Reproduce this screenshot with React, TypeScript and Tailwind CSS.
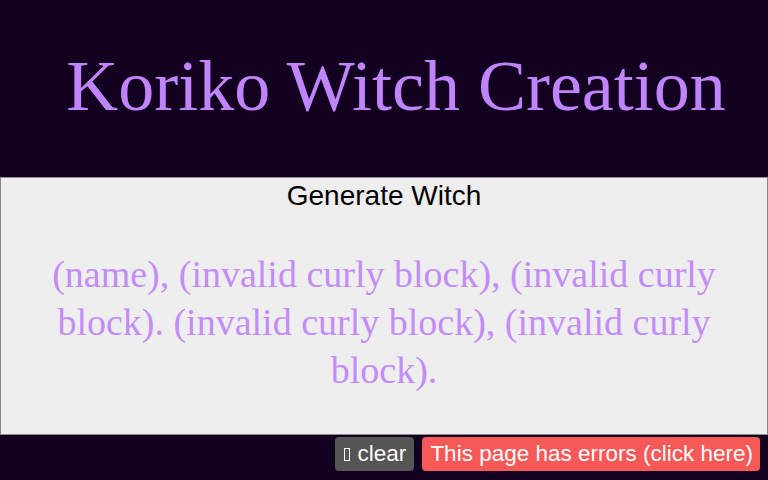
import { useState } from "react";

function App() {
  const [output] = useState(
    "(name), (invalid curly block), (invalid curly block). (invalid curly block), (invalid curly block)."
  );

  return (
    <div className="relative h-[480px] w-[768px] overflow-hidden bg-[#130020]" style={{ fontFamily: '"Liberation Serif", serif' }}>
      {/* header */}
      <h1 className="pt-[46px] pl-6 text-center text-[72px] leading-[80px] text-[#c084fc]">
        Koriko Witch Creation
      </h1>

      {/* generator box */}
      <div className="mt-[51px] h-[258px] border border-[#8a8a8a] bg-[#eeeeee]">
        <div className="pt-[1px] text-center text-[28px] leading-[34px] text-black" style={{ fontFamily: '"Liberation Sans", sans-serif' }}>
          Generate Witch
        </div>
        <p className="mt-[37px] px-12 text-center text-[38px] leading-[48px] text-[#c38cf7]">
          {output}
        </p>
      </div>

      {/* floating buttons */}
      <div className="absolute right-2 bottom-[9px] flex items-center gap-2 text-[22.5px] leading-[34px] text-white" style={{ fontFamily: '"Liberation Sans", sans-serif' }}>
        <button className="flex items-center gap-[8px] rounded bg-[#555555] pl-[9px] pr-[8px]">
          <span className="inline-block h-[13px] w-[6px] border border-white" />
          clear
        </button>
        <button className="rounded bg-[#f75858] pl-[8px] pr-[7px]">This page has errors (click here)</button>
      </div>
    </div>
  );
}

export default App;
